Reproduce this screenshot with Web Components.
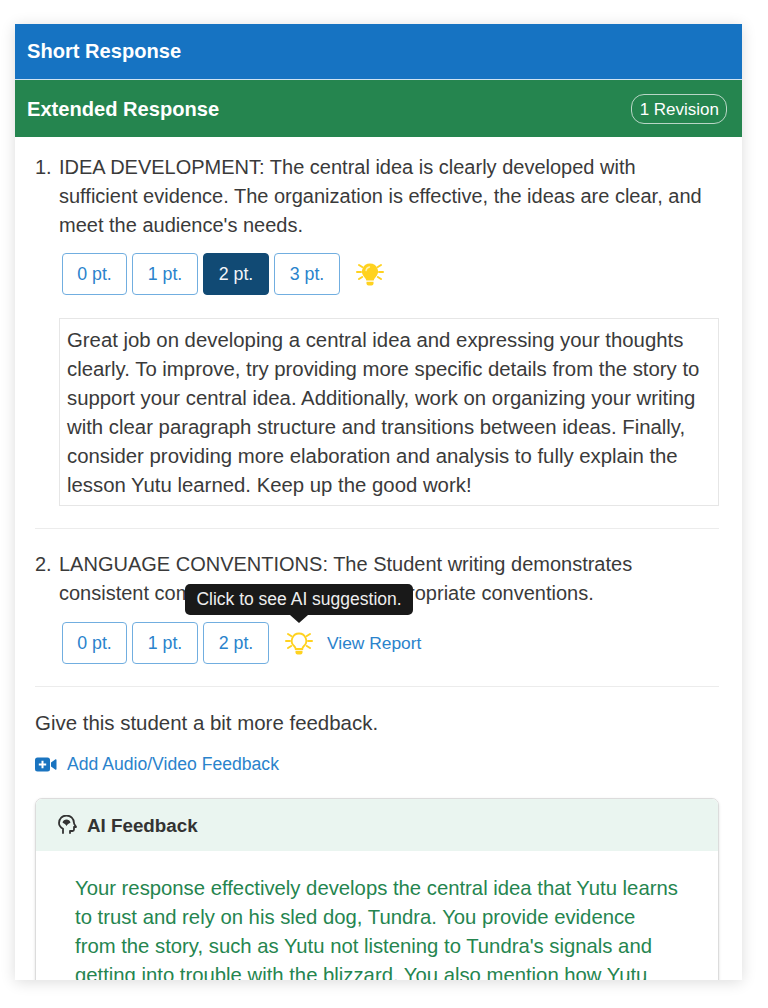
<!DOCTYPE html>
<html>
<head>
<meta charset="utf-8">
<style>
  html, body { margin: 0; height: 100%; background: #fff; overflow: hidden; }
  body { padding: 24px 26px 0 15px; box-sizing: border-box; font-family: "Liberation Sans", Arial, sans-serif; color: #3a3a3a; }
</style>
</head>
<body>
<rubric-card>
  <section-bar color="#1673c2">Short Response</section-bar>
  <section-bar color="#25854f" revision="1 Revision">Extended Response</section-bar>
  <rubric-body>
    <rubric-item number="1." points="4" selected="2" bulb="solid" text="IDEA DEVELOPMENT: The central idea is clearly developed with sufficient evidence. The organization is effective, the ideas are clear, and meet the audience's needs.">
      <feedback-box>Great job on developing a central idea and expressing your thoughts clearly. To improve, try providing more specific details from the story to support your central idea. Additionally, work on organizing your writing with clear paragraph structure and transitions between ideas. Finally, consider providing more elaboration and analysis to fully explain the lesson Yutu learned. Keep up the good work!</feedback-box>
    </rubric-item>
    <rubric-item number="2." points="3" bulb="outline" report tip="Click to see AI suggestion." text="LANGUAGE CONVENTIONS: The Student writing demonstrates consistent command of grade-level appropriate conventions."></rubric-item>
    <more-feedback></more-feedback>
    <ai-feedback>Your response effectively develops the central idea that Yutu learns to trust and rely on his sled dog, Tundra. You provide evidence from the story, such as Yutu not listening to Tundra's signals and getting into trouble with the blizzard. You also mention how Yutu learns to listen and follow Tundra's lead.</ai-feedback>
  </rubric-body>
</rubric-card>

<script>
class RubricCard extends HTMLElement {
  constructor() {
    super();
    this.attachShadow({ mode: 'open' });
    this.shadowRoot.innerHTML = `
      <style>
        :host { display: block; width: 727px; height: 956px; overflow: hidden; background: #fff;
                box-shadow: 0 2px 14px rgba(0,0,0,.14); }
      </style>
      <slot></slot>`;
  }
}

class SectionBar extends HTMLElement {
  constructor() {
    super();
    this.attachShadow({ mode: 'open' });
  }
  connectedCallback() {
    const revision = this.getAttribute('revision');
    this.shadowRoot.innerHTML = `
      <style>
        :host { display: flex; align-items: center; justify-content: space-between; height: 55px;
                padding: 0 15px 0 12px; color: #fff; font-weight: bold; font-size: 20.1px;
                background: ${this.getAttribute('color')}; border-bottom: 1px solid #cfe3f2; }
        :host([revision]) { border-bottom: 0; padding-top: 1px; height: 56px; }
        .pill { font-weight: normal; font-size: 17px; height: 30px; line-height: 29px; padding: 0 7px 0 8px; box-sizing: border-box;
                border: 1px solid #b9d6c6; border-radius: 13px; }
      </style>
      <span><slot></slot></span>
      ${revision ? `<span class="pill">${revision}</span>` : ''}`;
  }
}

class RubricBody extends HTMLElement {
  constructor() {
    super();
    this.attachShadow({ mode: 'open' });
    this.shadowRoot.innerHTML = `
      <style>:host { display: block; padding: 16px 23px 0 20px; font-size: 20.3px; line-height: 29px; }</style>
      <slot></slot>`;
  }
}

const BULB_RAYS = `
  <g stroke="#ffd21f" stroke-width="2" stroke-linecap="round" fill="none">
    <path d="M2 11h4M24 11h4M4 4l3.2 2M26 4l-3.2 2M4 18l3.2-2M26 18l-3.2-2"/>
  </g>`;

class RubricItem extends HTMLElement {
  constructor() {
    super();
    this.attachShadow({ mode: 'open' });
  }
  connectedCallback() {
    const selected = this.getAttribute('selected');
    const count = Number(this.getAttribute('points'));
    const solid = this.getAttribute('bulb') === 'solid';
    const tip = this.getAttribute('tip');
    let buttons = '';
    for (let i = 0; i < count; i++) {
      buttons += `<button class="${String(i) === selected ? 'on' : ''}">${i} pt.</button>`;
    }
    const bulb = solid
      ? `<svg width="30" height="26" viewBox="0 0 30 26">${BULB_RAYS}
           <path d="M15 2.5a8 8 0 0 0-5.4 13.9c1 1 1.6 2 1.7 3.1h7.4c.1-1.1.7-2.1 1.7-3.1A8 8 0 0 0 15 2.5z" fill="#ffd21f"/>
           <path d="M11.5 20.8h7v1.7a2 2 0 0 1-2 2h-3a2 2 0 0 1-2-2z" fill="#ffd21f"/>
           <path d="M11 9.5a4.5 4.5 0 0 1 3.5-3.5" stroke="#fff3b5" stroke-width="1.3" fill="none" stroke-linecap="round"/>
         </svg>`
      : `<svg width="30" height="26" viewBox="0 0 30 26">${BULB_RAYS}
           <path d="M15 3.5a7.2 7.2 0 0 0-4.9 12.5c1 1 1.5 2 1.6 3h6.600c.1-1 .6-2 1.600-3A7.200 7.200 0 0 0 15 3.500z" fill="none" stroke="#ffd21f" stroke-width="1.800"/>
           <path d="M11.500 20.800h7v1.700a2 2 0 0 1-2 2h-3a2 2 0 0 1-2-2z" fill="#ffd21f"/>
         </svg>`;
    this.shadowRoot.innerHTML = `
      <style>
        :host { display: block; padding-bottom: 22px; margin-bottom: 21px; border-bottom: 1px solid #ececec; }
        .line { display: grid; grid-template-columns: 24px 1fr; font-size: 20px; }
        .controls { position: relative; display: flex; align-items: center; gap: 5px; margin: 14px 0 0 27px; }
        :host(:first-child) .controls { margin-top: 13px; }
        button { width: 66px; height: 42px; padding: 0; box-sizing: border-box; background: #fff; color: #2a83cc;
                 border: 1px solid #71aee0; border-radius: 4px; font: 17.8px "Liberation Sans", Arial, sans-serif; }
        button:first-child { width: 65px; }
        button.on { background: #114a74; border-color: #114a74; color: #f2f5f8; }
        svg { display: block; margin-left: 10px; }
        .report { margin-left: 8px; color: #2a83cc; font-size: 17.4px; }
        .tip { position: absolute; left: 123px; top: -38px; width: 228px; height: 31px; border-radius: 5px; background: #191919;
               color: #eee; font-size: 17.5px; line-height: 31px; text-align: center; }
        .tip::after { content: ""; position: absolute; left: 105px; bottom: -8px; border: 9px solid transparent;
                      border-bottom: 0; border-top: 8px solid #191919; }
        .slot { display: block; margin: 23px 0 0 24px; }
      </style>
      <div class="line"><span>${this.getAttribute('number')}</span><span>${this.getAttribute('text')}</span></div>
      <div class="controls">
        ${buttons}${bulb}
        ${this.hasAttribute('report') ? '<span class="report">View Report</span>' : ''}
        ${tip ? `<div class="tip">${tip}</div>` : ''}
      </div>
      <div class="slot"><slot></slot></div>`;
    if (!this.children.length) this.shadowRoot.querySelector('.slot').style.display = 'none';
  }
}

class FeedbackBox extends HTMLElement {
  constructor() {
    super();
    this.attachShadow({ mode: 'open' });
    this.shadowRoot.innerHTML = `
      <style>:host { display: block; padding: 7px 7px 5px 7px; border: 1px solid #e6e6e6; font-size: 20.35px; }</style>
      <slot></slot>`;
  }
}

class MoreFeedback extends HTMLElement {
  constructor() {
    super();
    this.attachShadow({ mode: 'open' });
    this.shadowRoot.innerHTML = `
      <style>
        :host { display: block; font-size: 20.45px; }
        .link { display: flex; align-items: center; gap: 10px; margin-top: 13px; color: #2a83cc; font-size: 17.6px; }
        svg { display: block; }
      </style>
      <div>Give this student a bit more feedback.</div>
      <div class="link">
        <svg width="22" height="15" viewBox="0 0 22 15">
          <rect x="0" y="0.5" width="15" height="14" rx="2.5" fill="#1a74c0"/>
          <path d="M7.5 3.8v7.4M3.8 7.5h7.4" stroke="#fff" stroke-width="2"/>
          <path d="M16 5.5l4.2-3c.7-.5 1.3-.2 1.3.6v8.8c0 .8-.6 1.1-1.3.6l-4.2-3z" fill="#1a74c0"/>
        </svg>
        <span>Add Audio/Video Feedback</span>
      </div>`;
  }
}

class AiFeedback extends HTMLElement {
  constructor() {
    super();
    this.attachShadow({ mode: 'open' });
    this.shadowRoot.innerHTML = `
      <style>
        :host { display: block; margin-top: 19px; border: 1px solid #dcdcdc; border-radius: 7px 7px 0 0; overflow: hidden;
                box-shadow: 0 1px 3px rgba(0,0,0,.12); }
        header { display: flex; align-items: center; gap: 9px; height: 52px; padding-left: 21px; background: #eaf5f0;
                 font-weight: bold; font-size: 18.8px; color: #333; }
        svg { display: block; }
        .text { padding: 23px 40px 0 39px; color: #25854f; }
      </style>
      <header>
        <svg width="21" height="20" viewBox="0 0 21 20" fill="none" stroke="#333" stroke-width="1.8" stroke-linecap="round" stroke-linejoin="round">
          <path d="M6 18v-4.2C3.5 12.3 2 10.5 2 8a7.5 7.5 0 0 1 15 0c0 1 .5 1.5 1.5 3l.5 1h-2v2.5a1.5 1.5 0 0 1-1.5 1.5H13v2"/>
          <path d="M5.5 7.5c.5-2 2.2-3 4-3s3.5 1 4 3c-1.5 1-2.5 1.2-4 3.5-1.5-2.3-2.5-2.5-4-3.5z" fill="#333" stroke="none"/>
        </svg>
        <span>AI Feedback</span>
      </header>
      <div class="text"><slot></slot></div>`;
  }
}

customElements.define('rubric-card', RubricCard);
customElements.define('section-bar', SectionBar);
customElements.define('rubric-body', RubricBody);
customElements.define('rubric-item', RubricItem);
customElements.define('feedback-box', FeedbackBox);
customElements.define('more-feedback', MoreFeedback);
customElements.define('ai-feedback', AiFeedback);
</script>
</body>
</html>
